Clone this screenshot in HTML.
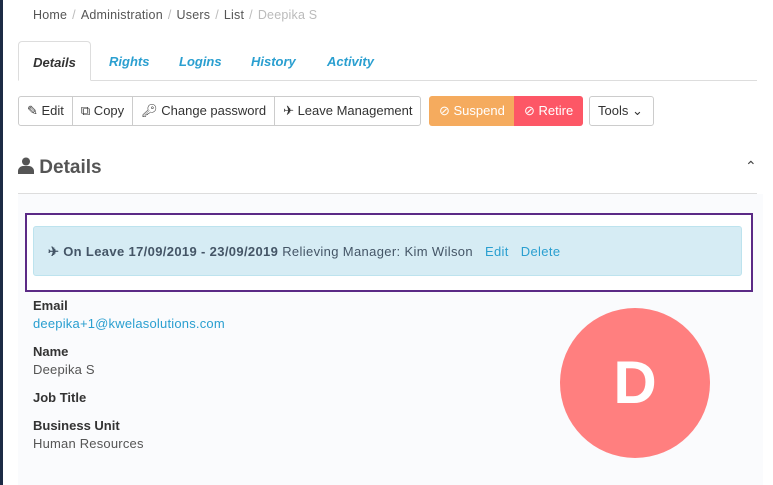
<!DOCTYPE html>
<html><head><style>
*{box-sizing:border-box;margin:0;padding:0}
body{width:773px;height:485px;overflow:hidden;background:#fff;font-family:"Liberation Sans",sans-serif;font-size:13px;color:#333;position:relative}
.strip{position:absolute;left:0;top:0;width:3px;height:485px;background:#1c2b45}
.abs{position:absolute;white-space:nowrap}
.bc{left:33px;top:8px;font-size:12.5px;color:#555;letter-spacing:0.2px}
.bc .s{color:#bbb;margin:0 5px}
.bc .c{color:#bbb}
.tabline{left:18px;top:80px;width:739px;height:1px;background:#ddd}
.tab{top:41px;height:40px;line-height:42px;font-style:italic;font-weight:bold;color:#2a9fd0;font-size:13px}
.tab.a{left:18px;width:73px;border:1px solid #ddd;border-bottom:1px solid #fff;border-radius:4px 4px 0 0;color:#333;text-align:center;background:#fff}
.bg{top:96px;height:30px;display:flex;border:1px solid #ccc;border-radius:3px}
.bg div{padding:0 8px;line-height:28px;border-left:1px solid #ccc;font-size:13px;color:#333}
.bg div:first-child{border-left:none}
.warn{top:96px;left:429px;height:30px;display:flex;border-radius:3px;overflow:hidden;color:#fff}
.warn div{line-height:30px;padding:0 10px}
h2{position:absolute;left:18px;top:157px;font-size:19px;color:#555;font-weight:bold}
.line{left:18px;top:193px;width:739px;height:1px;background:#ddd}
.panel{left:18px;top:194px;width:745px;height:291px;background:#fafbfd}
.pbox{left:25px;top:213px;width:728px;height:79px;border:2px solid #5b2a86;background:#fff}
.alert{left:33px;top:226px;width:709px;height:50px;background:#d6ecf4;border:1px solid #bde3ee;border-radius:3px;line-height:49px;padding-left:14px;color:#456;letter-spacing:0.35px}
.alert a{color:#2a9fd0;margin-left:8px}
.lbl{font-weight:bold;color:#333;left:33px}
.val{left:33px;color:#555;letter-spacing:0.2px}
.circle{left:560px;top:308px;width:150px;height:150px;border-radius:50%;background:#ff7f7f;color:#fff;font-weight:bold;font-size:60px;text-align:center;line-height:150px}
</style></head><body>
<div class="strip"></div>
<div class="abs bc">Home<span class="s">/</span>Administration<span class="s">/</span>Users<span class="s">/</span>List<span class="s">/</span><span class="c">Deepika S</span></div>
<div class="abs tabline"></div>
<div class="abs tab a">Details</div>
<div class="abs tab" style="left:109px">Rights</div>
<div class="abs tab" style="left:179px">Logins</div>
<div class="abs tab" style="left:251px">History</div>
<div class="abs tab" style="left:327px">Activity</div>
<div class="abs bg" style="left:18px"><div>✎ Edit</div><div>⧉ Copy</div><div>🔑︎ Change password</div><div>✈ Leave Management</div></div>
<div class="abs warn"><div style="background:#f5ab5e;width:85px">⊘ Suspend</div><div style="background:#fd5766;width:69px">⊘ Retire</div></div>
<div class="abs bg" style="left:589px;width:65px"><div>Tools ⌄</div></div>
<h2><svg width="16" height="17" viewBox="0 0 16 17" style="vertical-align:-1px"><circle cx="8" cy="4.5" r="4" fill="#555"/><path d="M0 17v-3c0-3 3-5 5-5h6c2 0 5 2 5 5v3z" fill="#555"/></svg> Details</h2>
<div class="abs" style="left:745px;top:158px;color:#444;font-size:14px">⌃</div>
<div class="abs line"></div>
<div class="abs panel"></div>
<div class="abs pbox"></div>
<div class="abs alert"><b>✈ On Leave 17/09/2019 - 23/09/2019</b> Relieving Manager: Kim Wilson <a>Edit</a> <a>Delete</a></div>
<div class="abs lbl" style="top:298px">Email</div>
<div class="abs val" style="top:316px;color:#2a9fd0">deepika+1@kwelasolutions.com</div>
<div class="abs lbl" style="top:344px">Name</div>
<div class="abs val" style="top:362px">Deepika S</div>
<div class="abs lbl" style="top:390px">Job Title</div>
<div class="abs lbl" style="top:418px">Business Unit</div>
<div class="abs val" style="top:436px">Human Resources</div>
<div class="abs circle">D</div>
</body></html>
